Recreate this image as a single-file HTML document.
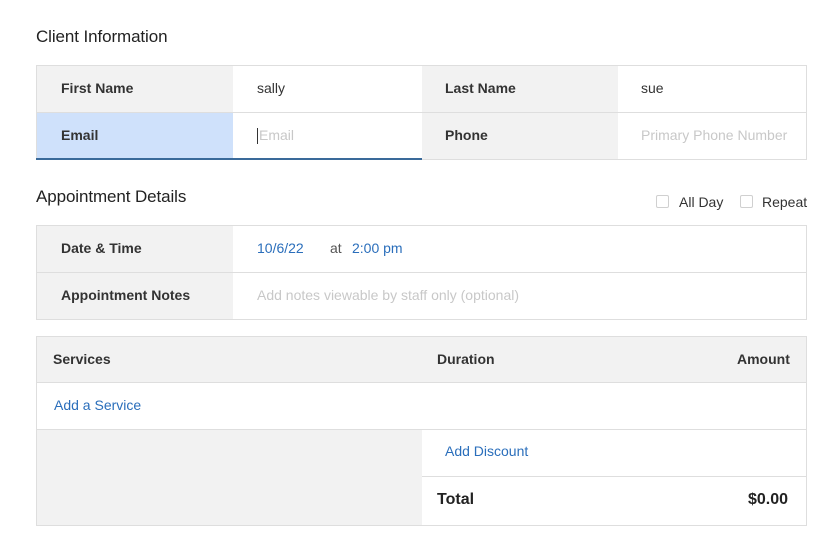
<!DOCTYPE html>
<html><head><style>
body{margin:0;width:840px;height:557px;background:#fff;font-family:"Liberation Sans",sans-serif;color:#222;position:relative;overflow:hidden}
.a{position:absolute;box-sizing:border-box}
.h{font-size:17px;color:#222;letter-spacing:-0.1px}
.g{background:#f2f2f2}
.b{font-size:14px;font-weight:bold;color:#333}
.t{font-size:14px;color:#333}
.p{font-size:14px;color:#c8c8c8}
.l{font-size:14px;color:#2a6ebb}
.ln{background:#dedede}
</style></head><body>
<div class="a h" style="left:36px;top:27px">Client Information</div>
<div class="a" style="left:36px;top:65px;width:771px;height:95px;border:1px solid #dedede"></div>
<div class="a g" style="left:37px;top:66px;width:196px;height:46px"></div>
<div class="a" style="left:37px;top:113px;width:196px;height:46px;background:#cfe1fb"></div>
<div class="a g" style="left:422px;top:66px;width:196px;height:93px"></div>
<div class="a ln" style="left:37px;top:112px;width:769px;height:1px"></div>
<div class="a" style="left:36px;top:158px;width:386px;height:2px;background:#3a6a9a"></div>
<div class="a b" style="left:61px;top:80px">First Name</div>
<div class="a t" style="left:257px;top:80px">sally</div>
<div class="a b" style="left:445px;top:80px">Last Name</div>
<div class="a t" style="left:641px;top:80px">sue</div>
<div class="a b" style="left:61px;top:127px">Email</div>
<div class="a" style="left:257px;top:128px;width:1px;height:16px;background:#333"></div>
<div class="a p" style="left:259px;top:127px">Email</div>
<div class="a b" style="left:445px;top:127px">Phone</div>
<div class="a p" style="left:641px;top:127px">Primary Phone Number</div>

<div class="a h" style="left:36px;top:187px">Appointment Details</div>
<div class="a" style="left:656px;top:195px;width:13px;height:13px;border:1px solid #d0d0d0;border-radius:2px"></div>
<div class="a t" style="left:679px;top:194px">All Day</div>
<div class="a" style="left:740px;top:195px;width:13px;height:13px;border:1px solid #d0d0d0;border-radius:2px"></div>
<div class="a t" style="left:762px;top:194px">Repeat</div>
<div class="a" style="left:36px;top:225px;width:771px;height:95px;border:1px solid #dedede"></div>
<div class="a g" style="left:37px;top:226px;width:196px;height:93px"></div>
<div class="a ln" style="left:37px;top:272px;width:769px;height:1px"></div>
<div class="a b" style="left:61px;top:240px">Date &amp; Time</div>
<div class="a l" style="left:257px;top:240px">10/6/22</div>
<div class="a t" style="left:330px;top:240px;color:#555">at</div>
<div class="a l" style="left:352px;top:240px">2:00 pm</div>
<div class="a b" style="left:61px;top:287px">Appointment Notes</div>
<div class="a p" style="left:257px;top:287px">Add notes viewable by staff only (optional)</div>

<div class="a" style="left:36px;top:336px;width:771px;height:190px;border:1px solid #dedede"></div>
<div class="a g" style="left:37px;top:337px;width:769px;height:45px"></div>
<div class="a ln" style="left:37px;top:382px;width:769px;height:1px"></div>
<div class="a ln" style="left:37px;top:429px;width:769px;height:1px"></div>
<div class="a g" style="left:37px;top:430px;width:385px;height:95px"></div>
<div class="a ln" style="left:422px;top:476px;width:384px;height:1px"></div>
<div class="a b" style="left:53px;top:351px">Services</div>
<div class="a b" style="left:437px;top:351px">Duration</div>
<div class="a b" style="left:737px;top:351px">Amount</div>
<div class="a l" style="left:54px;top:397px">Add a Service</div>
<div class="a l" style="left:445px;top:443px">Add Discount</div>
<div class="a b" style="left:437px;top:491px;font-size:16px;color:#222">Total</div>
<div class="a b" style="left:748px;top:491px;font-size:16px;color:#222">$0.00</div>
</body></html>
